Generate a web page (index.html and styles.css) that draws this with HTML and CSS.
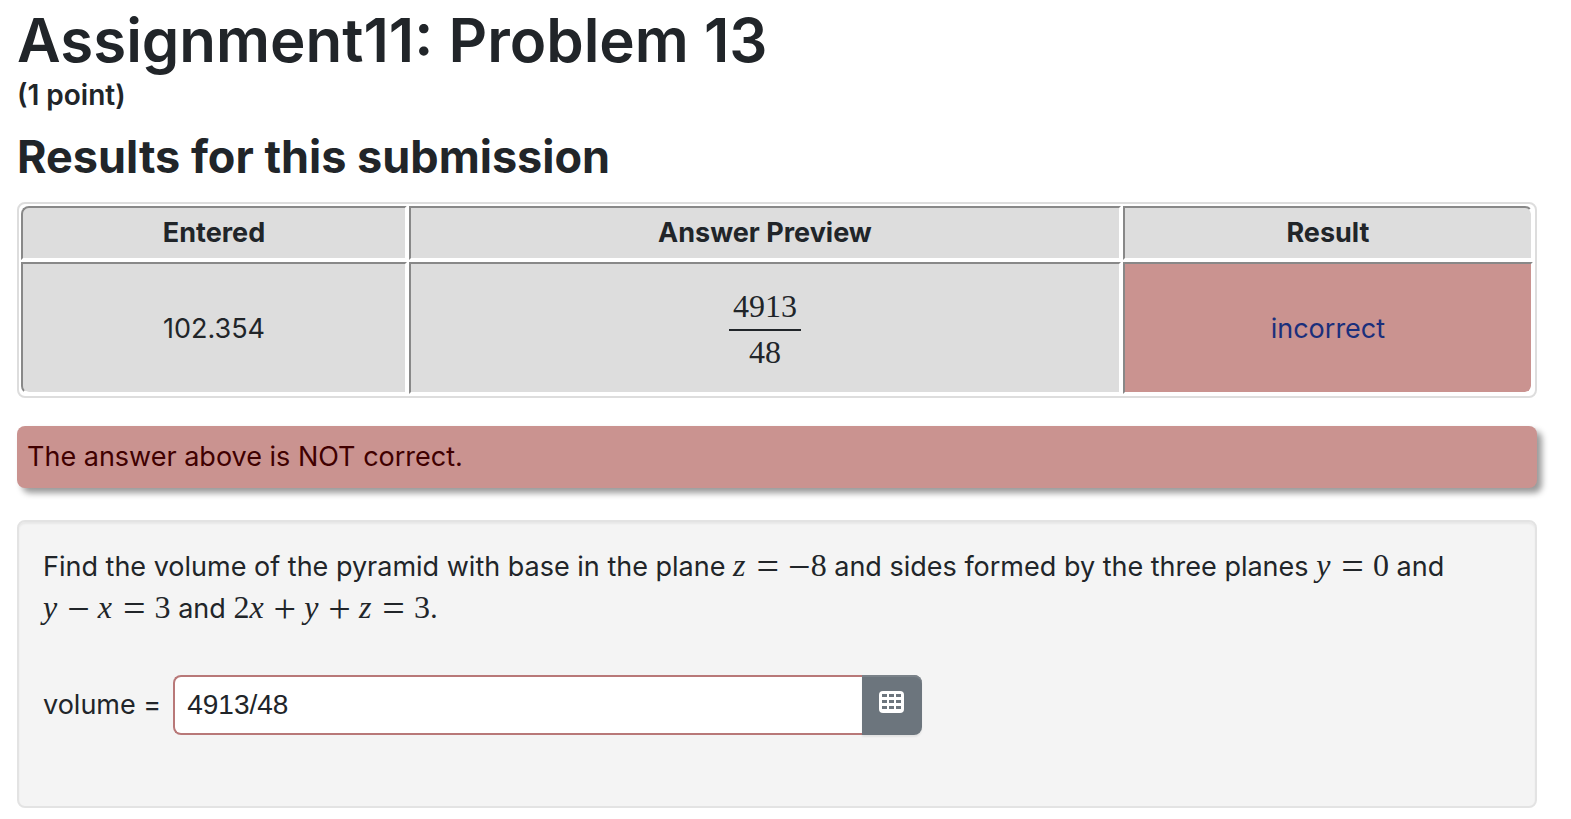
FILE: index.html
```html
<!DOCTYPE html>
<html lang="en">
<head>
<meta charset="utf-8">
<title>Assignment11: Problem 13</title>
<link rel="stylesheet" href="styles.css">
</head>
<body>
<main class="page">
  <h1 class="title">Assignment11: Problem 13</h1>
  <p class="points">(1 point)</p>
  <h2 class="subtitle">Results for this submission</h2>

  <table class="results">
    <thead>
      <tr><th class="col-entered" scope="col">Entered</th><th class="col-preview" scope="col">Answer Preview</th><th class="col-result" scope="col">Result</th></tr>
    </thead>
    <tbody>
      <tr>
        <td>102.354</td>
        <td><span class="fraction"><span class="numerator">4913</span><span>48</span></span></td>
        <td class="incorrect"><a href="#answer">incorrect</a></td>
      </tr>
    </tbody>
  </table>

  <div class="alert" role="alert">The answer above is NOT correct.</div>

  <section class="problem">
    <p class="statement">Find the volume of the pyramid with base in the plane <span class="math"><i>z</i><span class="op rel">=</span><span class="op">−</span>8</span> and sides formed by the three planes <span class="math"><i>y</i><span class="op rel">=</span>0</span> and <span class="math"><i>y</i><span class="op bin">−</span><i>x</i><span class="op rel">=</span>3</span> and <span class="math">2<i>x</i><span class="op bin">+</span><i>y</i><span class="op bin">+</span><i>z</i><span class="op rel">=</span>3</span>.</p>
    <div class="answer">
      <label for="answer">volume =</label>
      <div class="input-group">
        <input class="answer-input" id="answer" type="text" value="4913/48">
        <button class="editor-button" type="button" aria-label="Equation editor">
          <svg class="grid-icon" viewBox="0 0 25 22" aria-hidden="true">
            <rect width="25" height="22" rx="4" fill="#fff"/>
            <path fill="#6c757d" d="M3 3h5v3H3zM10 3h5v3h-5zM17 3h5v3h-5zM3 9h5v3H3zM10 9h5v3h-5zM17 9h5v3h-5zM3 15h5v3H3zM10 15h5v3h-5zM17 15h5v3h-5z"/>
          </svg>
        </button>
      </div>
    </div>
  </section>
</main>
</body>
</html>
```
FILE: styles.css
```css
* { box-sizing: border-box; }

body {
  margin: 0;
  background: #fff;
  color: #212529;
  font-family: Inter, "Liberation Sans", sans-serif;
  font-size: 27px;
  line-height: 42px;
}

.page { padding: 4px 34px 11px 17px; }

.title {
  margin: 0;
  font-size: 60px;
  font-weight: 600;
  line-height: 72px;
}

.points {
  margin: 0;
  font-size: 28px;
  font-weight: 600;
  line-height: 38px;
}

.subtitle {
  margin: 14px 0 16px;
  font-size: 45px;
  font-weight: 700;
  line-height: 58px;
}

.results {
  width: 100%;
  table-layout: fixed;
  border: 2px solid #ddd;
  border-radius: 8px;
  border-collapse: separate;
  border-spacing: 2px;
  text-align: center;
}

.results th,
.results td {
  padding: 4px;
  border: 2px solid;
  border-color: #888 #fff #fff #888;
  background: #ddd;
  background-clip: padding-box;
}

.results th { height: 54px; font-weight: 700; }
.results td { height: 132px; padding-top: 6px; }
.col-entered { width: 25.6%; }
.col-result { width: 27.2%; }
.results th:first-child { border-top-left-radius: 8px; }
.results th:last-child { border-top-right-radius: 8px; }
.results td:first-child { border-bottom-left-radius: 8px; }
.results td:last-child { border-bottom-right-radius: 8px; }

.results .incorrect { background-color: #ca9390; }
.incorrect a { color: #1a2f7c; text-decoration: none; }

.fraction {
  display: inline-flex;
  flex-direction: column;
  font-family: "Liberation Serif", serif;
  font-size: 32px;
  vertical-align: middle;
}

.numerator {
  padding: 0 4px 2px;
  border-bottom: 2px solid #212529;
}

.alert {
  margin-top: 28px;
  padding: 10px;
  border-radius: 8px;
  background: #ca9390;
  box-shadow: 5px 5px 6px rgba(0, 0, 0, .4);
  color: #400000;
}

.problem {
  margin-top: 32px;
  padding: 24px 24px 71px;
  border: 2px solid #e3e3e3;
  border-radius: 8px;
  background: #f4f4f4;
  box-shadow: inset 0 2px 2px rgba(0, 0, 0, .05);
}

.statement { margin: 0 0 45px; }

.math {
  font-family: "Liberation Serif", serif;
  font-size: 32px;
  line-height: 1;
  white-space: nowrap;
}

.math i { margin-right: 2px; }

.op {
  font-size: 40px;
  line-height: 24px;
  vertical-align: -4px;
}

.rel { margin: 0 9px; }
.bin { margin: 0 8px; }

.answer { display: flex; align-items: center; gap: 12px; }
.input-group { display: flex; width: 51%; }

.answer-input {
  flex: 1;
  min-width: 0;
  height: 60px;
  padding: 0 12px;
  border: 2px solid #b87878;
  border-right: 0;
  border-radius: 8px 0 0 8px;
  background: #fff;
  color: #212529;
  font-family: "Liberation Sans", sans-serif;
  font-size: 28px;
}

.editor-button {
  display: flex;
  justify-content: center;
  width: 60px;
  height: 60px;
  padding: 16px 0 0;
  border: 0;
  border-radius: 0 8px 8px 0;
  background: #6c757d;
  box-shadow: inset 0 2px 0 #7a8289, 0 2px 2px rgba(0, 0, 0, .07);
}

.grid-icon { width: 25px; height: 22px; }
```
